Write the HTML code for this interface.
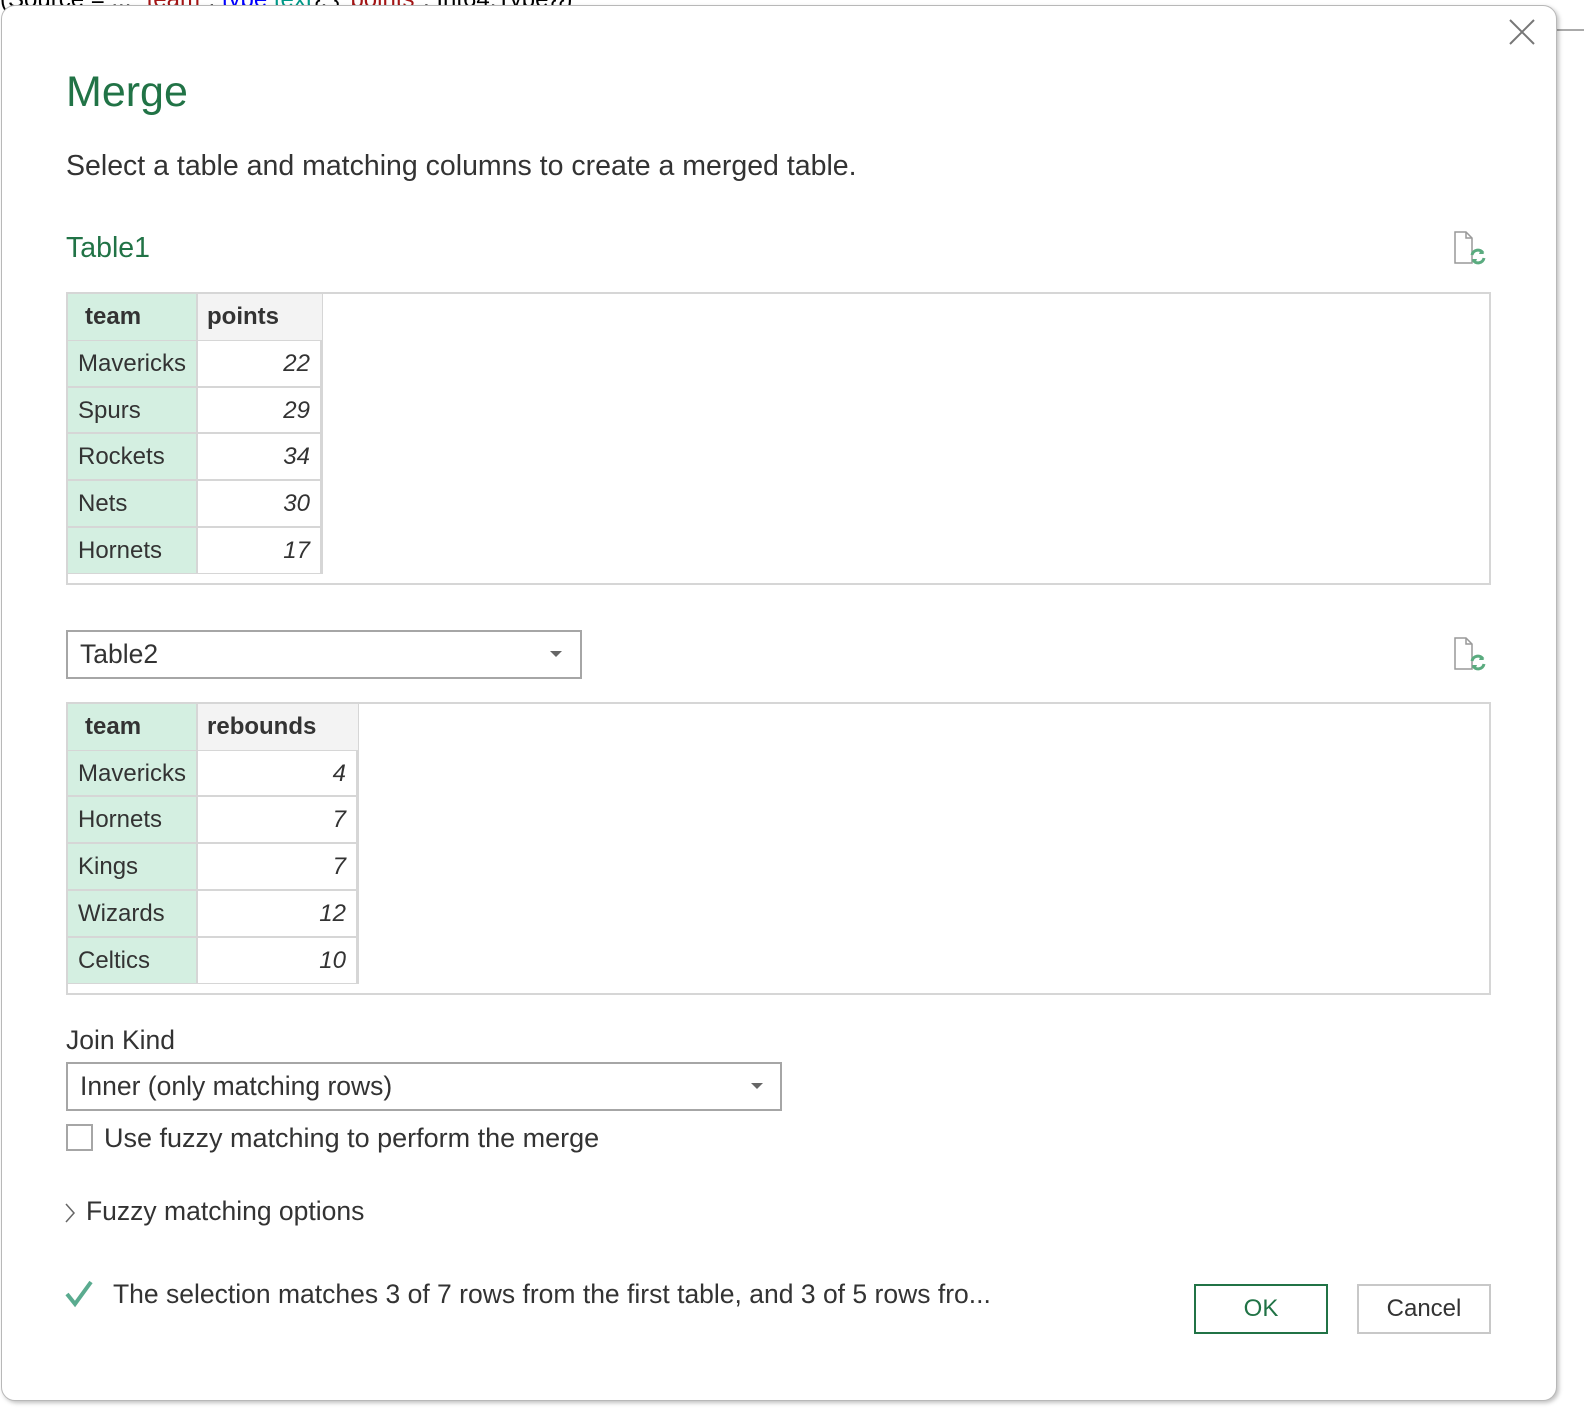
<!DOCTYPE html>
<html style="overflow:hidden;width:1584px;height:1417px"><head><meta charset="utf-8"><style>
*{margin:0;padding:0;box-sizing:border-box}
body{width:1584px;height:1417px;background:#fff;position:relative;overflow:hidden;font-family:"Liberation Sans",sans-serif;color:#333}
.a{position:absolute}
.dlg{left:1px;top:5px;width:1556px;height:1396px;border:1px solid #b8b8b8;border-radius:14px;background:#fff;box-shadow:2px 2px 4px rgba(0,0,0,.25)}
.t{white-space:nowrap}
.cell{position:absolute;font-size:24px;line-height:46px;white-space:nowrap}
.tc{background:#d4efe1;padding-left:10px}
.nc{background:#fff;text-align:right;padding-right:10px;font-style:italic}
.box{border:2px solid #d6d6d6}
.dd{border:2px solid #a6a6a6;background:#fff;font-size:26.5px;padding-left:12px}
.arr{position:absolute;width:0;height:0;border-left:6px solid transparent;border-right:6px solid transparent;border-top:6px solid #666}
</style></head><body>
<div class="a t" style="left:0;top:-14px;font-size:24px;color:#000">(Source = ... <span style="color:#a31515">"team"</span>, <span style="color:#00f">type</span> <span style="color:#098">text</span>}, {<span style="color:#a31515">"points"</span>, Int64.Type}})</div>
<div class="a" style="left:1556px;top:29px;width:28px;height:2px;background:#aaa"></div>
<div class="a dlg"></div>
<svg class="a" style="left:1508px;top:18px" width="28" height="28"><path d="M2 2L26 26M26 2L2 26" stroke="#777" stroke-width="2"/></svg>
<div class="a t" style="left:66px;top:68px;font-size:43px;color:#217346">Merge</div>
<div class="a t" style="left:66px;top:150px;font-size:28.5px;color:#333">Select a table and matching columns to create a merged table.</div>
<div class="a t" style="left:66px;top:232px;font-size:28.5px;color:#217346">Table1</div>

<svg class="a" style="left:1453px;top:230px" width="36" height="36"><path d="M2 2H13L19 8V33H2Z" fill="#fff" stroke="#999" stroke-width="1.5"/><path d="M13 2V8H19" fill="none" stroke="#999" stroke-width="1.5"/><path d="M19 25A6 6 0 0 1 30 23M31 28A6 6 0 0 1 20 30" fill="none" stroke="#5aab7f" stroke-width="3"/><path d="M28 19L31 24L26 24Z M22 34L19 29L24 29Z" fill="#5aab7f"/></svg>
<svg class="a" style="left:1453px;top:636px" width="36" height="36"><path d="M2 2H13L19 8V33H2Z" fill="#fff" stroke="#999" stroke-width="1.5"/><path d="M13 2V8H19" fill="none" stroke="#999" stroke-width="1.5"/><path d="M19 25A6 6 0 0 1 30 23M31 28A6 6 0 0 1 20 30" fill="none" stroke="#5aab7f" stroke-width="3"/><path d="M28 19L31 24L26 24Z M22 34L19 29L24 29Z" fill="#5aab7f"/></svg>

<div class="a box" style="left:66px;top:292px;width:1425px;height:293px"></div>
<div class="a" style="left:68px;top:294px;width:255px;height:280px;background:#d6d6d6"></div>
<div class="cell tc" style="left:68px;top:294px;width:128px;height:46px;font-weight:bold;padding-left:17px">team</div>
<div class="cell" style="left:198px;top:294px;width:124px;height:46px;background:#f3f3f3;font-weight:bold;padding-left:9px">points</div>
<div class="cell tc" style="left:68px;top:341px;width:128px;height:45px">Mavericks</div><div class="cell nc" style="left:198px;top:341px;width:122px;height:45px">22</div>
<div class="cell tc" style="left:68px;top:388px;width:128px;height:44px">Spurs</div><div class="cell nc" style="left:198px;top:388px;width:122px;height:44px">29</div>
<div class="cell tc" style="left:68px;top:434px;width:128px;height:45px">Rockets</div><div class="cell nc" style="left:198px;top:434px;width:122px;height:45px">34</div>
<div class="cell tc" style="left:68px;top:481px;width:128px;height:45px">Nets</div><div class="cell nc" style="left:198px;top:481px;width:122px;height:45px">30</div>
<div class="cell tc" style="left:68px;top:528px;width:128px;height:45px">Hornets</div><div class="cell nc" style="left:198px;top:528px;width:122px;height:45px">17</div>

<div class="a dd" style="left:66px;top:630px;width:516px;height:49px;line-height:45px">Table2</div>
<div class="arr" style="left:550px;top:651px"></div>

<div class="a box" style="left:66px;top:702px;width:1425px;height:293px"></div>
<div class="a" style="left:68px;top:704px;width:291px;height:280px;background:#d6d6d6"></div>
<div class="cell tc" style="left:68px;top:704px;width:128px;height:46px;font-weight:bold;padding-left:17px">team</div>
<div class="cell" style="left:198px;top:704px;width:160px;height:46px;background:#f3f3f3;font-weight:bold;padding-left:9px">rebounds</div>
<div class="cell tc" style="left:68px;top:751px;width:128px;height:44px">Mavericks</div><div class="cell nc" style="left:198px;top:751px;width:158px;height:44px">4</div>
<div class="cell tc" style="left:68px;top:797px;width:128px;height:45px">Hornets</div><div class="cell nc" style="left:198px;top:797px;width:158px;height:45px">7</div>
<div class="cell tc" style="left:68px;top:844px;width:128px;height:45px">Kings</div><div class="cell nc" style="left:198px;top:844px;width:158px;height:45px">7</div>
<div class="cell tc" style="left:68px;top:891px;width:128px;height:45px">Wizards</div><div class="cell nc" style="left:198px;top:891px;width:158px;height:45px">12</div>
<div class="cell tc" style="left:68px;top:938px;width:128px;height:45px">Celtics</div><div class="cell nc" style="left:198px;top:938px;width:158px;height:45px">10</div>

<div class="a t" style="left:66px;top:1025px;font-size:26.5px">Join Kind</div>
<div class="a dd" style="left:66px;top:1062px;width:716px;height:49px;line-height:45px">Inner (only matching rows)</div>
<div class="arr" style="left:751px;top:1083px"></div>
<div class="a" style="left:66px;top:1124px;width:27px;height:27px;border:2px solid #a6a6a6"></div>
<div class="a t" style="left:104px;top:1123px;font-size:27px">Use fuzzy matching to perform the merge</div>
<svg class="a" style="left:64px;top:1202px" width="12" height="22"><path d="M2 2L10 11L2 20" fill="none" stroke="#666" stroke-width="1.5"/></svg>
<div class="a t" style="left:86px;top:1196px;font-size:26.5px">Fuzzy matching options</div>

<svg class="a" style="left:64px;top:1280px" width="30" height="28"><path d="M3 14L11 24L27 2" fill="none" stroke="#5aab8f" stroke-width="4"/></svg>
<div class="a t" style="left:113px;top:1279px;font-size:26.5px">The selection matches 3 of 7 rows from the first table, and 3 of 5 rows fro...</div>
<div class="a" style="left:1194px;top:1284px;width:134px;height:50px;border:2px solid #217346;text-align:center;line-height:46px;font-size:24px;color:#217346">OK</div>
<div class="a" style="left:1357px;top:1284px;width:134px;height:50px;border:2px solid #c8c8c8;text-align:center;line-height:46px;font-size:24px">Cancel</div>
</body></html>
